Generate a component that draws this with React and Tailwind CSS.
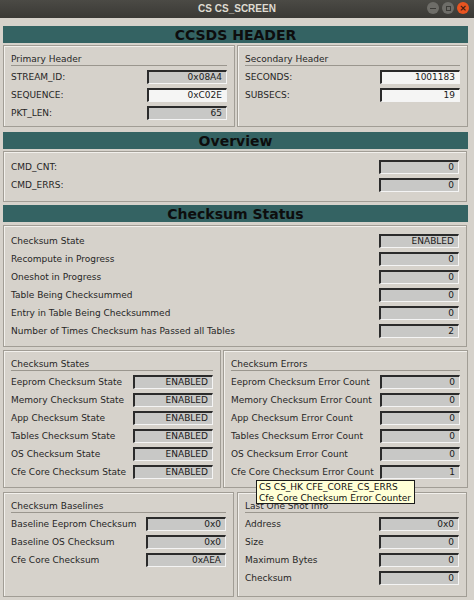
import React from "react";

const font = { fontFamily: '"DejaVu Sans", sans-serif' };

function Field({ value, white }) {
  return (
    <div
      className={`w-[80px] h-[14px] shrink-0 border-t-2 border-l-2 border-b border-r border-t-[#2b2b2b] border-l-[#2b2b2b] border-b-[#f4f4f4] border-r-[#f4f4f4] ${
        white ? "bg-[#f5f5f4]" : "bg-[#c8c8c6]"
      } text-right pr-[4px] text-[9px] leading-[11px] text-[#1a1a1a]`}
    >
      {value}
    </div>
  );
}

function Row({ label, value, white }) {
  return (
    <div className="flex items-center justify-between h-[14px]">
      <span className="text-[9px] text-[#262626] whitespace-nowrap relative top-[1px]">{label}</span>
      <Field value={value} white={white} />
    </div>
  );
}

function Panel({ title, rows, className = "", pt = "pt-[8px]" }) {
  return (
    <div
      className={`border border-[#a19d95] shadow-[inset_1px_1px_0_#f2f0ec] px-[7px] ${pt} ${className}`}
    >
      {title && (
        <div className="h-[12px] text-[9px] leading-[12px] text-[#262626] border-b border-[#9a968e] mb-[4px]">
          <span className="relative top-[-1px]">{title}</span>
        </div>
      )}
      <div className="flex flex-col gap-[4px]">
        {rows.map((r, i) => (
          <Row key={i} label={r[0]} value={r[1]} white={r[2]} />
        ))}
      </div>
    </div>
  );
}

function Bar({ children }) {
  return (
    <div className="h-[17px] bg-[#346363] flex items-center justify-center text-[14px] font-bold text-[#0d0d0d] leading-none">
      {children}
    </div>
  );
}

export default function App() {
  return (
    <div
      className="w-[474px] h-[600px] bg-[#d6d2cb] relative overflow-hidden"
      style={font}
    >
      {/* Title bar */}
      <div className="h-[18px] bg-gradient-to-b from-[#4b4a45] to-[#3a3935] relative flex items-center justify-center">
        <span
          className="text-[10px] font-bold text-[#dfdbd2] relative top-[-1px]"
          style={{ fontFamily: '"Liberation Sans", sans-serif' }}
        >
          CS CS_SCREEN
        </span>
        <div className="absolute right-[5px] top-[2px] flex gap-[3px]">
          <div className="w-[12px] h-[12px] rounded-full bg-[#6e6d68] flex items-center justify-center">
            <div className="w-[6px] h-[1px] bg-[#3c3b37]" />
          </div>
          <div className="w-[12px] h-[12px] rounded-full bg-[#6e6d68] flex items-center justify-center">
            <div className="w-[5px] h-[5px] border border-[#3c3b37]" />
          </div>
          <div className="w-[12px] h-[12px] rounded-full bg-[#e95420] flex items-center justify-center text-[9px] leading-none text-[#3a1a10] font-bold">
            ×
          </div>
        </div>
      </div>

      <div className="w-[465px] ml-[3px] flex flex-col">
        <div className="mt-[8px]">
          <Bar>CCSDS HEADER</Bar>
        </div>
        <div className="flex gap-[2px] mt-[2px] h-[82px]">
          <Panel
            className="w-[232px]"
            title="Primary Header"
            rows={[
              ["STREAM_ID:", "0x08A4"],
              ["SEQUENCE:", "0xC02E", true],
              ["PKT_LEN:", "65"],
            ]}
          />
          <Panel
            className="w-[231px]"
            title="Secondary Header"
            rows={[
              ["SECONDS:", "1001183", true],
              ["SUBSECS:", "19", true],
            ]}
          />
        </div>

        <div className="mt-[5px]">
          <Bar>Overview</Bar>
        </div>
        <Panel
          className="mt-[2px] h-[51px] w-[464px]"
          rows={[
            ["CMD_CNT:", "0"],
            ["CMD_ERRS:", "0"],
          ]}
        />

        <div className="mt-[3px]">
          <Bar>Checksum Status</Bar>
        </div>
        <Panel
          className="mt-[3px] h-[122px] w-[464px]"
          rows={[
            ["Checksum State", "ENABLED"],
            ["Recompute in Progress", "0"],
            ["Oneshot in Progress", "0"],
            ["Table Being Checksummed", "0"],
            ["Entry in Table Being Checksummed", "0"],
            ["Number of Times Checksum has Passed all Tables", "2"],
          ]}
        />

        <div className="flex gap-[2px] mt-[3px] h-[138px]">
          <Panel
            className="w-[218px]"
            title="Checksum States"
            rows={[
              ["Eeprom Checksum State", "ENABLED"],
              ["Memory Checksum State", "ENABLED"],
              ["App Checksum State", "ENABLED"],
              ["Tables Checksum State", "ENABLED"],
              ["OS Checksum State", "ENABLED"],
              ["Cfe Core Checksum State", "ENABLED"],
            ]}
          />
          <Panel
            className="w-[245px]"
            title="Checksum Errors"
            rows={[
              ["Eeprom Checksum Error Count", "0"],
              ["Memory Checksum Error Count", "0"],
              ["App Checksum Error Count", "0"],
              ["Tables Checksum Error Count", "0"],
              ["OS Checksum Error Count", "0"],
              ["Cfe Core Checksum Error Count", "1"],
            ]}
          />
        </div>

        <div className="flex gap-[3px] mt-[4px] h-[105px]">
          <Panel
            className="w-[231px]"
            title="Checksum Baselines"
            rows={[
              ["Baseline Eeprom Checksum", "0x0"],
              ["Baseline OS Checksum", "0x0"],
              ["Cfe Core Checksum", "0xAEA"],
            ]}
          />
          <Panel
            className="w-[230px]"
            title="Last One Shot Info"
            rows={[
              ["Address", "0x0"],
              ["Size", "0"],
              ["Maximum Bytes", "0"],
              ["Checksum", "0"],
            ]}
          />
        </div>
      </div>

      {/* Tooltip */}
      <div className="absolute left-[256px] top-[480px] w-[159px] h-[24px] bg-[#ffffd6] border border-[#1a1a1a] px-[2px] pt-[1px] text-[9px] leading-[11px] text-[#111] whitespace-nowrap">
        <div>CS CS_HK CFE_CORE_CS_ERRS</div>
        <div>Cfe Core Checksum Error Counter</div>
      </div>
    </div>
  );
}
